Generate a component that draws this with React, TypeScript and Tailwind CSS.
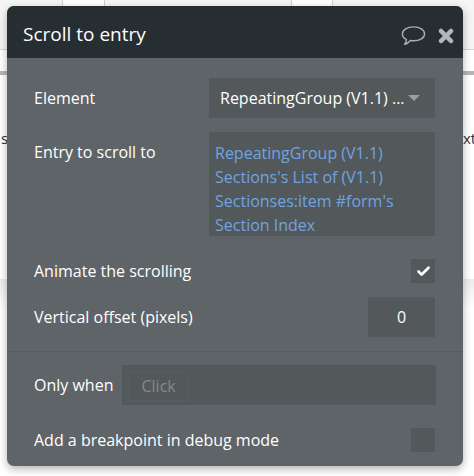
import { Check, X } from "lucide-react";

const font = "font-['Open_Sans','Noto_Sans',sans-serif]";

function Row({ label, children, className, labelClassName = "" }: { label: string; children: React.ReactNode; className: string; labelClassName?: string }) {
  return (
    <div className={`flex justify-between ${className}`}>
      <span className={`text-[16px] leading-[24px] text-white ${labelClassName}`}>{label}</span>
      {children}
    </div>
  );
}

export default function App() {
  return (
    <div className={`relative h-[476px] w-[474px] overflow-hidden bg-white ${font}`}>
      {/* page behind the dialog */}
      <div className="absolute left-0 top-0 h-[50px] w-full border-b border-[#d4d4d4] bg-[#f5f5f5]" />
      <div className="absolute left-[62px] top-0 h-[16px] w-[43px] border-x border-[#cfcfcf] bg-white" />
      <div className="absolute left-[291px] top-0 h-[16px] w-[42px] border-x border-[#cfcfcf] bg-white" />
      <div className="absolute left-0 top-[71px] h-[4px] w-full bg-[#b5b5b5]" />
      <span className="absolute left-[1px] top-[127px] text-[15px] text-[#333]">s</span>
      <span className="absolute left-[463px] top-[127px] text-[15px] text-[#333]">xt</span>
      <div className="absolute left-0 top-[279px] h-[30px] w-full bg-linear-to-b from-[#ececec] to-white" />

      <div className="absolute left-[7px] top-[6px] h-[460px] w-[456px] overflow-hidden rounded-[7px] bg-[#5f6468] shadow-[0_3px_8px_rgba(0,0,0,0.3)]">
        <div className="flex h-[52px] items-center justify-between bg-[#272e31] pl-[16px] pr-[7px] pt-[4px]">
          <span className="text-[19px] text-white">Scroll to entry</span>
          <div className="flex items-center gap-[10px] pt-[3px]">
            <svg width="25" height="22" viewBox="0 0 26 22" fill="none" stroke="#a9adaf" strokeWidth="1.5">
              <path d="M13 1.500c6.600 0 11.500 3.100 11.500 7.300S19.600 16 13 16c-1.100 0-2.200-.1-3.200-.3-1.500 1.800-3.600 3.400-6.300 4.300 1.300-1.400 2-3 2.100-5.400C3 13.300 1.500 11.200 1.500 8.800 1.500 4.600 6.400 1.500 13 1.500z" />
            </svg>
            <X size={20} strokeWidth={5.5} color="#b4b7b9" />
          </div>
        </div>

        <div className="pl-[27px] pr-[28px] pt-[20px]">
          <Row label="Element" className="items-center">
            <div className="flex h-[40px] w-[226px] items-center justify-between bg-[#53585b] pl-[11px] pr-[15px] text-[16px] text-white">
              <span>RepeatingGroup (V1.1) ...</span>
              <span className="h-0 w-0 border-x-[6px] border-t-[6px] border-x-transparent border-t-[#9a9ea1]" />
            </div>
          </Row>
          <Row label="Entry to scroll to" labelClassName="mt-[8px]" className="mt-[14px] items-start">
            <div className="h-[104px] w-[226px] bg-[#53585b] px-[6px] pt-[9px] text-[16px] leading-[24px] text-[#6fa4e0]">
              RepeatingGroup (V1.1) Sections's List of (V1.1) Sectionses:item #form's Section Index
            </div>
          </Row>
          <Row label="Animate the scrolling" className="mt-[23px] items-center">
            <div className="flex h-[24px] w-[24px] items-center justify-center bg-[#53585b]">
              <Check size={15} strokeWidth={4.5} color="#fff" />
            </div>
          </Row>
          <Row label="Vertical offset (pixels)" className="mt-[14px] items-center">
            <div className="flex h-[40px] w-[67px] items-center justify-center bg-[#53585b] text-[16px] text-white">0</div>
          </Row>
        </div>

        <div className="mt-[14px] border-t border-[#575c60] pl-[27px] pr-[27px] pt-[13px]">
          <div className="flex items-center gap-[9px]">
            <span className="text-[16px] leading-[24px] text-white">Only when</span>
            <div className="flex h-[40px] flex-1 items-center bg-[#53585b] pl-[6px]">
              <span className="mt-[2px] border border-dotted border-[#5c6164] px-[12px] py-[2px] text-[16px] text-[#85898c]">Click</span>
            </div>
          </div>
          <div className="mt-[23px] flex items-center justify-between pr-px">
            <span className="text-[16px] leading-[24px] text-white">Add a breakpoint in debug mode</span>
            <div className="h-[24px] w-[24px] bg-[#53585b]" />
          </div>
        </div>
      </div>
    </div>
  );
}
